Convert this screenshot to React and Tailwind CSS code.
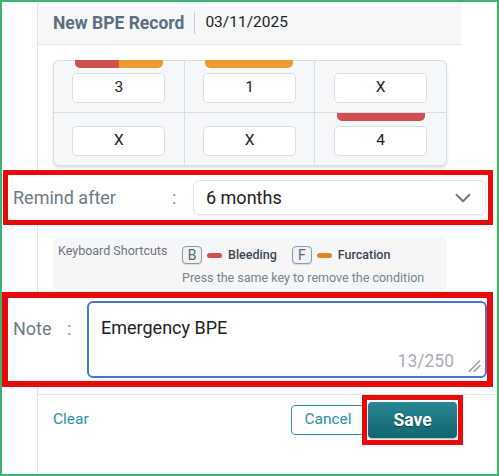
import { ChevronDown } from 'lucide-react'

const cells = [
  [
    { value: '3', bars: ['bg-[#d14f4f]', 'bg-[#ef9a2f]'] },
    { value: '1', bars: ['bg-[#ef9a2f]'] },
    { value: 'X', bars: [] },
  ],
  [
    { value: 'X', bars: [] },
    { value: 'X', bars: [] },
    { value: '4', bars: ['bg-[#d14f4f]'] },
  ],
]

function ToothCell({ cell, row, col }) {
  const borders = [row === 0 ? 'border-b border-[#d8dee6]' : '', col < 2 ? 'border-r border-[#d8dee6]' : ''].join(' ')
  return (
    <div className={`relative flex justify-center ${row === 0 ? 'pt-[12px] pb-[9px]' : 'pt-[13px] pb-[9px]'} ${borders}`}>
      {cell.bars.length ? (
        <div className={`absolute left-1/2 -translate-x-1/2 ${row === 0 ? '-top-px' : 'top-0'} flex h-[8px] w-[88px] overflow-hidden rounded-b-[5px]`}>
          {cell.bars.map((b, i) => (
            <div key={i} className={`h-full flex-1 ${b}`} />
          ))}
        </div>
      ) : null}
      <div className="flex h-[30px] w-[93px] items-center justify-center rounded-[5px] border border-[#d9dee6] bg-white text-[15.5px] text-[#222]">
        {cell.value}
      </div>
    </div>
  )
}

function KeyCap({ letter }) {
  return (
    <div className="flex h-[18px] w-[20px] items-center justify-center rounded-[4px] border border-[#8e99a5] bg-[#eef1f5] text-[14px] leading-none text-[#5b6673] shadow-[0_1px_1px_rgba(0,0,0,0.12)]">
      {letter}
    </div>
  )
}

export default function App() {
  return (
    <div className="h-[476px] w-[499px] overflow-hidden border-2 border-[#3cb371] bg-white font-['Roboto',sans-serif]">
      <div className="ml-[35px] flex h-full flex-col border-l border-[#e1e5ea]">
        <div className="flex h-[43px] w-[424px] items-center border-b border-[#e2e6eb] bg-[#f5f7f9] pl-[15px]">
          <div className="text-[17.5px] font-bold text-[#5d6e80]">New BPE Record</div>
          <div className="mx-[10px] h-[22px] w-px bg-[#c9cfd6]" />
          <div className="text-[15.5px] text-[#222]">03/11/2025</div>
        </div>

        <div className="ml-[15px] mt-[15px] grid w-[394px] grid-cols-3 rounded-[6px] border border-[#d8dee6] bg-[#f5f7f9] shadow-[0_2px_3px_rgba(0,0,0,0.12)]">
          {cells.map((row, r) =>
            row.map((cell, c) => <ToothCell key={`${r}-${c}`} cell={cell} row={r} col={c} />)
          )}
        </div>

        <div className="-ml-[35px] mt-[4px] flex h-[55px] w-[490px] items-center border-[5px] border-[#e80a0a] bg-white pl-[5px] pr-[2px]">
          <div className="w-[159px] text-[18px] text-[#6f7b88]">Remind after</div>
          <div className="w-[21px] text-[18px] text-[#8a94a0]">:</div>
          <div className="flex h-[35px] flex-1 items-center justify-between rounded-[6px] border border-[#e0e4ea] pl-[12px] pr-[9px] shadow-[0_1px_2px_rgba(0,0,0,0.06)]">
            <span className="text-[18px] text-[#222]">6 months</span>
            <ChevronDown size={26} strokeWidth={1.7} className="text-[#6b7580]" />
          </div>
        </div>

        <div className="ml-[15px] mt-[12px] flex h-[53px] w-[394px] rounded-[6px] bg-[#f5f6f8] pl-[5px] pt-[6px]">
          <div className="w-[124px] text-[12.5px] leading-[16px] text-[#6b7580]">Keyboard Shortcuts</div>
          <div className="flex flex-col">
            <div className="mt-[3px] flex items-center">
              <KeyCap letter="B" />
              <div className="ml-[5px] h-[5px] w-[15px] rounded-full bg-[#d14f4f]" />
              <span className="ml-[6px] text-[12.5px] font-medium text-[#3b4656]">Bleeding</span>
              <div className="ml-[15px]">
                <KeyCap letter="F" />
              </div>
              <div className="ml-[5px] h-[5px] w-[15px] rounded-full bg-[#e0861a]" />
              <span className="ml-[6px] text-[12.5px] font-medium text-[#3b4656]">Furcation</span>
            </div>
            <div className="mt-[5px] text-[12.5px] leading-[16px] text-[#7a838e]">
              Press the same key to remove the condition
            </div>
          </div>
        </div>

        <div className="-ml-[36px] mt-[2px] flex h-[95px] w-[491px] items-start border-[6px] border-[#e80a0a] bg-white pl-[5px] pt-[3px]">
          <div className="w-[54px] pt-[14px] text-[18px] text-[#6f7b88]">Note</div>
          <div className="w-[20px] pt-[14px] text-[18px] text-[#8a94a0]">:</div>
          <div className="relative h-[77px] flex-1 rounded-[6px] border-2 border-[#4a76cf] pl-[12px] pt-[11px]">
            <div className="text-[18px] text-[#222]">Emergency BPE</div>
            <div className="absolute bottom-[5px] right-[31px] text-[17.5px] leading-[20px] text-[#a9afb7]">13/250</div>
            <svg className="absolute bottom-[4px] right-[4px]" width="14" height="12" viewBox="0 0 14 12">
              <path d="M12.5 1 L2 11.5 M13 5.5 L7 11.5" stroke="#9aa3ad" strokeWidth="1.6" strokeLinecap="round" fill="none" />
            </svg>
          </div>
        </div>

        <div className="mt-[7px] flex h-[51px] items-center border-t border-[#dde2e8] pl-[15px] pr-[34px]">
          <span className="text-[15.5px] text-[#2b93a3]">Clear</span>
          <div className="flex-1" />
          <div className="flex h-[30px] w-[74px] items-center justify-center rounded-[4px] border border-[#2b93a3] text-[15.5px] text-[#2b93a3]">
            Cancel
          </div>
          <div className="relative z-10 -ml-[3px] self-start border-[5px] border-[#e80a0a] bg-white px-[1px] py-[2px]">
            <div className="flex h-[36px] w-[89px] items-center justify-center rounded-[4px] bg-gradient-to-b from-[#2b8794] to-[#0e6470] text-[17.5px] font-bold text-white shadow-[0_1px_2px_rgba(0,0,0,0.3)] [text-shadow:0_1px_1px_rgba(0,0,0,0.35)]">
              Save
            </div>
          </div>
        </div>
      </div>
    </div>
  )
}
